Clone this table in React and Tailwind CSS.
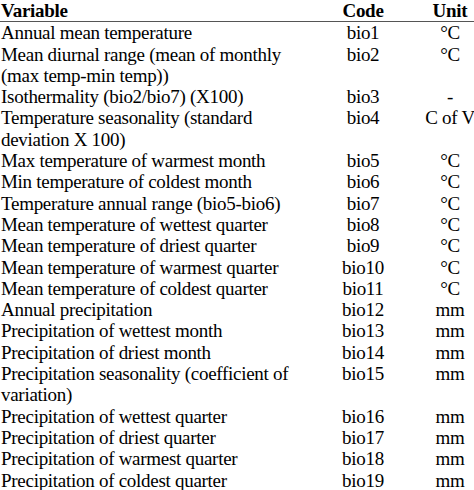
import React from 'react';

const rows = [
  ['Annual mean temperature', 'bio1', '°C'],
  ['Mean diurnal range (mean of monthly (max temp-min temp))', 'bio2', '°C'],
  ['Isothermality (bio2/bio7) (X100)', 'bio3', '-'],
  ['Temperature seasonality (standard deviation X 100)', 'bio4', 'C of V'],
  ['Max temperature of warmest month', 'bio5', '°C'],
  ['Min temperature of coldest month', 'bio6', '°C'],
  ['Temperature annual range (bio5-bio6)', 'bio7', '°C'],
  ['Mean temperature of wettest quarter', 'bio8', '°C'],
  ['Mean temperature of driest quarter', 'bio9', '°C'],
  ['Mean temperature of warmest quarter', 'bio10', '°C'],
  ['Mean temperature of coldest quarter', 'bio11', '°C'],
  ['Annual precipitation', 'bio12', 'mm'],
  ['Precipitation of wettest month', 'bio13', 'mm'],
  ['Precipitation of driest month', 'bio14', 'mm'],
  ['Precipitation seasonality (coefficient of variation)', 'bio15', 'mm'],
  ['Precipitation of wettest quarter', 'bio16', 'mm'],
  ['Precipitation of driest quarter', 'bio17', 'mm'],
  ['Precipitation of warmest quarter', 'bio18', 'mm'],
  ['Precipitation of coldest quarter', 'bio19', 'mm'],
];

const App = () => {
  return (
    <div className="w-[474px] h-[490px] overflow-hidden bg-white text-black text-[19px] tracking-[-0.28px] leading-[21.3px] font-['Liberation_Serif','Times_New_Roman',serif]">
      {/* header */}
      <div className="grid grid-cols-[310px_104px_70px] font-bold border-b border-[#555] pl-px">
        <div>Variable</div>
        <div className="text-center">Code</div>
        <div className="text-center">Unit</div>
      </div>
      {rows.map(([name, code, unit]) => (
        <div key={code} className="grid grid-cols-[310px_104px_70px] pl-px">
          <div>{name}</div>
          <div className="text-center">{code}</div>
          <div className="text-center whitespace-nowrap">{unit}</div>
        </div>
      ))}
    </div>
  );
};

export default App;
